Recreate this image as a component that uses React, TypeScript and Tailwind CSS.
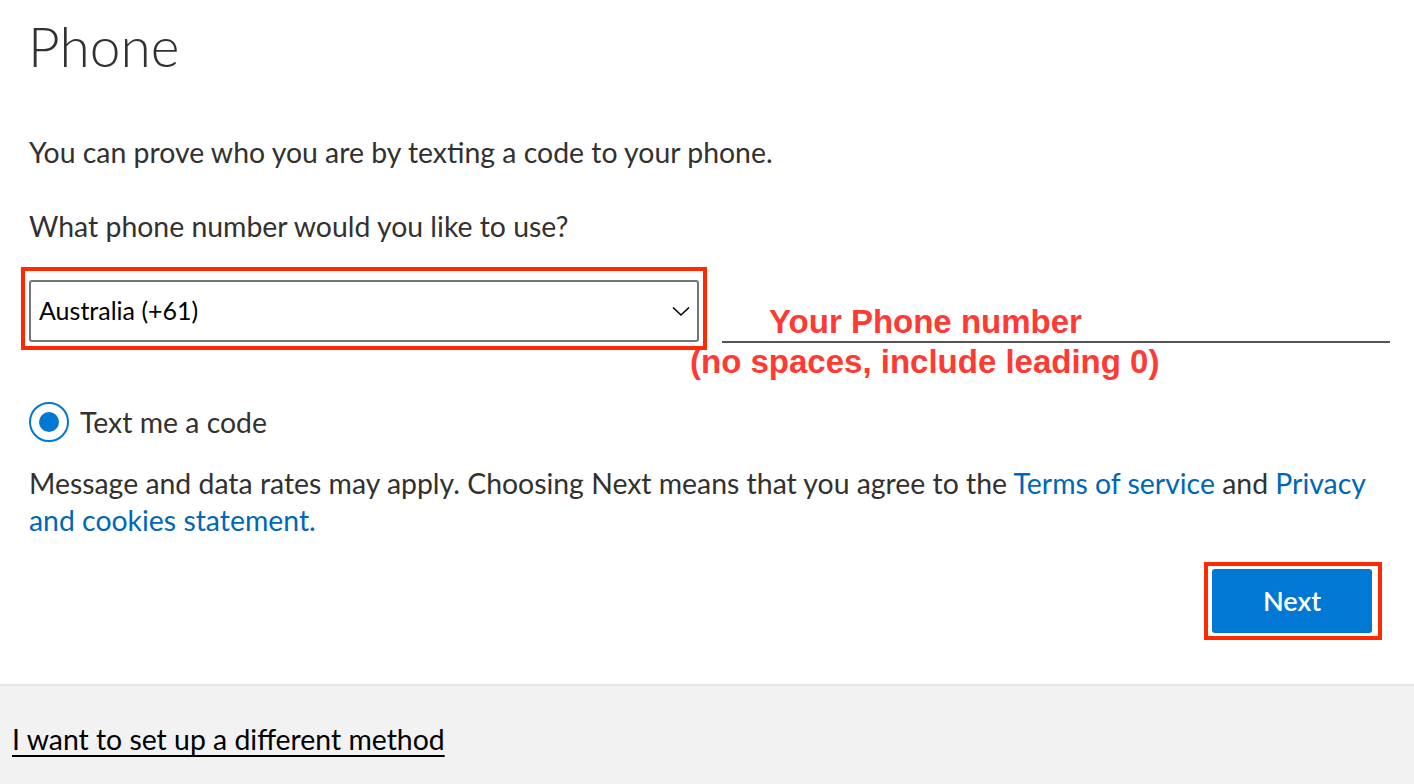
import React from 'react';

const body = "font-['Lato','Open_Sans',sans-serif]";
const note = "absolute font-['Liberation_Sans',Arial,sans-serif] font-bold text-[33px] leading-[38px] text-[#ff3a33] whitespace-nowrap";

const App: React.FC = () => {
  return (
    <div className={`w-[1414px] h-[784px] bg-white flex flex-col text-[#323130] ${body}`}>
      <main className="flex-1 pl-[29px] pr-[32px] flex flex-col">
        <h1 className="mt-[14px] -ml-[1px] text-[55px] font-light leading-[64px] text-[#323130]">Phone</h1>

        <p className="mt-[56px] text-[28.4px] leading-[36px]">You can prove who you are by texting a code to your phone.</p>
        <p className="mt-[38px] text-[28.4px] leading-[36px]">What phone number would you like to use?</p>

        <div className="relative mt-[23px] flex items-end gap-[15px]">
          <div className="shrink-0 -ml-[8px] border-[4px] border-[#ff2a00] pt-[9px] pb-[4px] px-[4px]">
            <div className="w-[670px] h-[62px] border-2 border-[#767676] rounded-[3px] flex items-center justify-between pl-[8px] pr-[7px]">
              <span className="text-[25px] text-black">Australia (+61)</span>
              <svg width="18" height="12" viewBox="0 0 18 12" fill="none" stroke="#000" strokeWidth="1.6">
                <path d="M1 2.5 L9 10 L17 2.5" />
              </svg>
            </div>
          </div>
          <div className="shrink-0 mb-[7px] w-[668px] h-[2px] bg-[#555]" />

          <div className={`${note} left-[740px] top-[36px]`}>Your Phone number</div>
          <div className={`${note} left-[661px] top-[76px]`}>(no spaces, include leading 0)</div>
        </div>

        <label className="mt-[52px] flex items-center gap-[11px]">
          <span className="w-[40px] h-[40px] rounded-full border-2 border-[#0078d4] flex items-center justify-center">
            <span className="w-[20px] h-[20px] rounded-full bg-[#0078d4]" />
          </span>
          <span className="text-[28.4px] leading-[36px]">Text me a code</span>
        </label>

        <p className="mt-[23px] text-[28.4px] leading-[37px] max-w-[1345px]">
          Message and data rates may apply. Choosing Next means that you agree to the{' '}
          <a className="text-[#0067b8]">Terms of service</a> and{' '}
          <a className="text-[#0067b8]">Privacy and cookies statement.</a>
        </p>

        <div className="mt-[23px] flex justify-end">
          <div className="border-[4px] border-[#ff2a00] pt-[3px] pb-[3px] pl-[4px] pr-[6px]">
            <button className="w-[160px] h-[64px] rounded-[3px] bg-[#0078d4] text-white text-[27px] font-semibold">Next</button>
          </div>
        </div>
      </main>

      <footer className="h-[100px] border-t-2 border-[#e6e6e6] bg-[#f2f2f2] flex items-center pl-[12px] pt-[8px]">
        <a className="text-[28.4px] text-black underline underline-offset-[5px] decoration-2">I want to set up a different method</a>
      </footer>
    </div>
  );
};

export default App;
